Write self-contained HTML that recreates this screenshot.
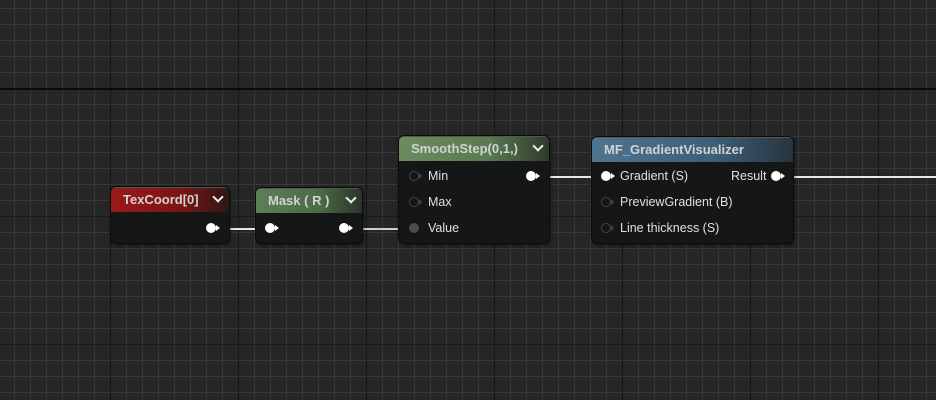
<!DOCTYPE html>
<html><head><style>
html,body{margin:0;padding:0}
body{width:936px;height:400px;overflow:hidden;position:relative;font-family:"Liberation Sans",sans-serif;
background-color:#262626;
background-image:
linear-gradient(to bottom, transparent 88px, #0a0a0a 88px, #0a0a0a 90px, transparent 90px),
linear-gradient(to right, transparent 110px, #161616 110px, #161616 111px, transparent 111px),
linear-gradient(to bottom, transparent 88px, #1a1a1a 88px, #1a1a1a 89px, transparent 89px),
linear-gradient(to right, transparent 14px, #383838 14px, #383838 15px, transparent 15px),
linear-gradient(to bottom, transparent 8px, #383838 8px, #383838 9px, transparent 9px);
background-size:936px 400px,128px 400px,936px 128px,16px 400px,936px 16px;
background-repeat:no-repeat,repeat,repeat,repeat,repeat;}
.node{position:absolute;background:#151616;border-radius:5px;box-shadow:0 0 0 1px #0b0b0b,1px 2px 4px rgba(0,0,0,.6);border-top:1px solid #555}
.hd{height:24px;border-radius:4px 4px 0 0;color:#d2d2d2;font-size:13px;font-weight:bold;line-height:24px;padding-left:12px;position:relative}
.chev{position:absolute;right:7px;width:6px;height:6px;border-right:2px solid #eee;border-bottom:2px solid #eee;transform:rotate(45deg);top:5px}
.row{position:absolute;font-size:12.5px;color:#e0e0e0;line-height:14px}
.pin{position:absolute;width:10px;height:10px;border-radius:50%}
.pin.on{background:#fff}
.pin.on:after{content:"";position:absolute;left:10px;top:2px;border-left:4px solid #fff;border-top:3px solid transparent;border-bottom:3px solid transparent}
.pin.off{border:1px solid #444;width:8px;height:8px}
.pin.off:after{content:"";position:absolute;left:9px;top:1px;border-left:3px solid #444;border-top:3px solid transparent;border-bottom:3px solid transparent}
.pin.gray{background:#4a4a4a}
.wire{position:absolute;height:2px;background:#e8e8e8}
</style></head><body>
<div class="wire" style="left:220px;top:228px;width:50px"></div>
<div class="wire" style="left:350px;top:228px;width:62px;background:#ccc"></div>
<div class="wire" style="left:537px;top:176px;width:68px"></div>
<div class="wire" style="left:780px;top:176px;width:156px"></div>

<div class="node" style="left:111px;top:187px;width:118px;height:55px">
<div class="hd" style="background:linear-gradient(to right,#9a1a1a,#7a1414 60%,#2b1818)">TexCoord[0]<span class="chev"></span></div>
<div class="pin on" style="left:95px;top:35px"></div>
</div>

<div class="node" style="left:256px;top:188px;width:106px;height:54px">
<div class="hd" style="background:linear-gradient(to right,#5d7f55,#4c6a46 60%,#2b3329)">Mask ( R )<span class="chev"></span></div>
<div class="pin on" style="left:9px;top:34px"></div>
<div class="pin on" style="left:83px;top:34px"></div>
</div>

<div class="node" style="left:399px;top:136px;width:150px;height:106px">
<div class="hd" style="background:linear-gradient(to right,#6a8c60,#587a50 60%,#2e3a2c)">SmoothStep(0,1,)<span class="chev"></span></div>
<div class="pin off" style="left:10px;top:34px"></div><div class="row" style="left:29px;top:32px">Min</div>
<div class="pin on" style="left:127px;top:34px"></div>
<div class="pin off" style="left:10px;top:60px"></div><div class="row" style="left:29px;top:58px">Max</div>
<div class="pin gray" style="left:10px;top:86px"></div><div class="row" style="left:29px;top:84px">Value</div>
</div>

<div class="node" style="left:592px;top:137px;width:201px;height:105px">
<div class="hd" style="background:linear-gradient(to right,#4e7490,#3d5f78 60%,#28343d)">MF_GradientVisualizer</div>
<div class="pin on" style="left:9px;top:33px"></div><div class="row" style="left:28px;top:31px">Gradient (S)</div>
<div class="row" style="left:139px;top:31px">Result</div><div class="pin on" style="left:179px;top:33px"></div>
<div class="pin off" style="left:9px;top:59px"></div><div class="row" style="left:28px;top:57px">PreviewGradient (B)</div>
<div class="pin off" style="left:9px;top:85px"></div><div class="row" style="left:28px;top:83px">Line thickness (S)</div>
</div>
</body></html>
